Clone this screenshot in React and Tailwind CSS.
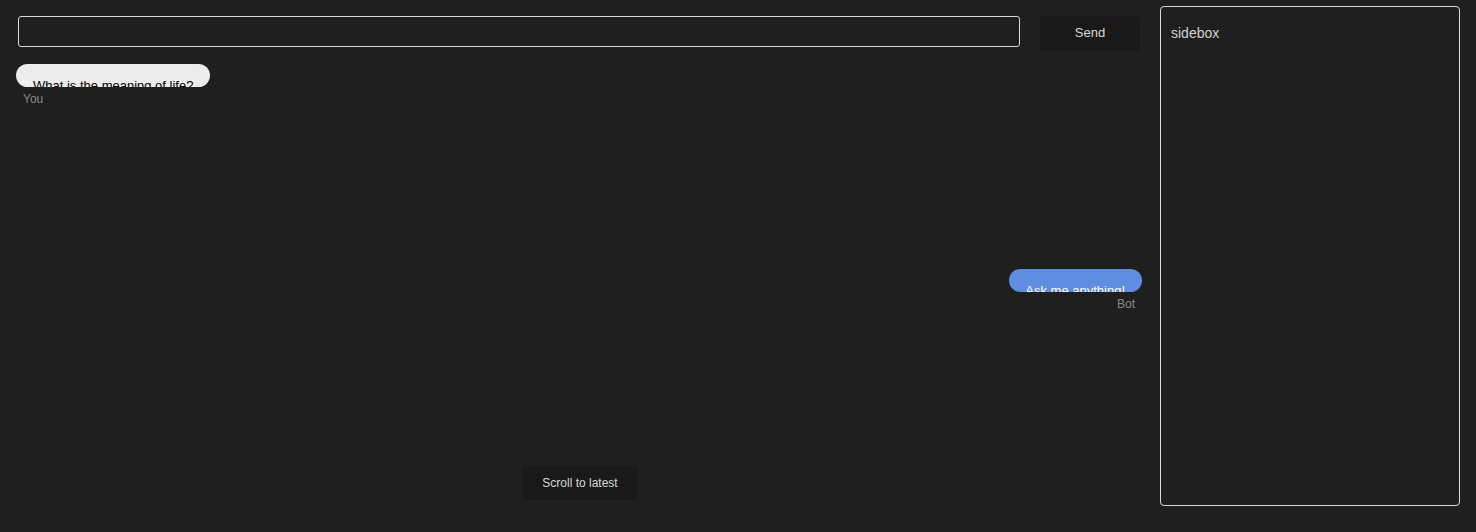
export default function App() {
  return (
    <div
      className="flex h-[532px] w-full bg-[#1f1f1f] text-[#d6d6d6]"
      style={{ fontFamily: '"Liberation Sans", Arial, sans-serif' }}
    >
      <div className="relative flex w-[1160px] shrink-0 flex-col pl-4 pr-[18px] pt-4">
        <div className="ml-[2px] mr-[2px] flex items-start gap-5">
          <input
            className="h-[31px] flex-1 rounded-[3px] border border-[#d9d9d9] bg-transparent px-2 text-[13px] text-[#e5e5e5] outline-none"
            type="text"
          />
          <button className="h-[35px] w-[100px] rounded-[4px] bg-[#191919] pb-[2px] text-[13px] text-[#d8d8d8]">
            Send
          </button>
        </div>

        <div className="mt-[13px] flex flex-col items-start">
          <div className="h-[23px] overflow-hidden rounded-full bg-[#ececec] pl-[17px] pr-[17px] pt-[14px] text-[13px] leading-[15px] text-black">
            What is the meaning of life?
          </div>
          <div className="mt-1 pl-[7px] text-xs leading-4 text-[#8a8a8a]">You</div>
        </div>

        <div className="mt-[162px] flex flex-col items-end">
          <div className="h-[23px] overflow-hidden rounded-full bg-[#5f8de0] pl-[16px] pr-[17px] pt-[14px] text-[13px] leading-[15px] text-white">
            Ask me anything!
          </div>
          <div className="mt-1 pr-[7px] text-xs leading-4 text-[#8a8a8a]">Bot</div>
        </div>

        <button className="absolute bottom-8 left-1/2 h-[34px] w-[115px] -translate-x-1/2 rounded-[4px] bg-[#191919] text-xs text-[#d8d8d8]">
          Scroll to latest
        </button>
      </div>

      <div className="mt-[6px] h-[500px] w-[300px] shrink-0 rounded-[4px] border border-[#d9d9d9] px-[10px] pt-4 text-sm leading-5 text-[#d0d0d0]">
        sidebox
      </div>
    </div>
  );
}
